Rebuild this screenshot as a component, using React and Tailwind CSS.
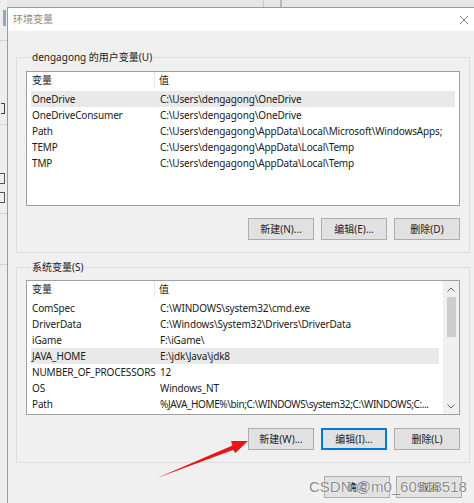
import React from 'react';

const FONT = { fontFamily: '"Noto Sans", "Noto Sans CJK SC", sans-serif' };

const userVars = [
  ['OneDrive', 'C:\\Users\\dengagong\\OneDrive', true],
  ['OneDriveConsumer', 'C:\\Users\\dengagong\\OneDrive'],
  ['Path', 'C:\\Users\\dengagong\\AppData\\Local\\Microsoft\\WindowsApps;'],
  ['TEMP', 'C:\\Users\\dengagong\\AppData\\Local\\Temp'],
  ['TMP', 'C:\\Users\\dengagong\\AppData\\Local\\Temp'],
];

const sysVars = [
  ['ComSpec', 'C:\\WINDOWS\\system32\\cmd.exe'],
  ['DriverData', 'C:\\Windows\\System32\\Drivers\\DriverData'],
  ['iGame', 'F:\\iGame\\'],
  ['JAVA_HOME', 'E:\\jdk\\Java\\jdk8', true],
  ['NUMBER_OF_PROCESSORS', '12'],
  ['OS', 'Windows_NT'],
  ['Path', '%JAVA_HOME%\\bin;C:\\WINDOWS\\system32;C:\\WINDOWS;C:...', false, true],
];

const Btn = ({ children, focused }) => (
  <div
    className={`w-[66px] h-[22px] flex items-center justify-center text-[10px] text-[#222] bg-[#e1e1e1] border ${
      focused ? 'border-[#0078d7] border-[2px]' : 'border-[#adadad]'
    }`}
  >
    {children}
  </div>
);

const Header = () => (
  <div className="h-[19px] flex text-[10px] text-[#1a1a1a] pb-[3px] items-center">
    <div className="w-[128px] pl-[5px] h-full flex items-center border-r border-[#e5e5e5]">变量</div>
    <div className="pl-[4px]">值</div>
  </div>
);

const Rows = ({ rows }) => (
  <div className="flex flex-col">
    {rows.map(([name, value, sel, tight]) => (
      <div
        key={name}
        className={`mx-[4px] pl-[1px] h-[16px] leading-[16px] grid grid-cols-[128px_1fr] text-[10px] text-[#1a1a1a] tracking-[-0.15px] whitespace-nowrap overflow-hidden ${
          sel ? 'bg-[#e9e9e9]' : ''
        }`}
      >
        <span>{name}</span>
        <span className={`overflow-hidden ${tight ? 'tracking-[-0.4px]' : ''}`}>{value}</span>
      </div>
    ))}
  </div>
);

function App() {
  return (
    <div className="relative w-[474px] h-[503px] overflow-hidden bg-[#e8e8e8] flex" style={FONT}>
      {/* background window strip */}
      <div className="w-[7px] shrink-0 flex flex-col pt-[10px] bg-[#eeeeee] overflow-hidden">
        <div className="h-[16px] w-[3px] ml-[3px] bg-[#4a7ab5] opacity-60" />
        <div className="h-[14px]" />
        <div className="h-px bg-[#d4d4d4]" />
        <div className="h-[62px]" />
        <div className="h-[11px] w-[4px] ml-[1px] border-y border-r border-[#444]" />
        <div className="h-px bg-[#d4d4d4] mt-[10px]" />
        <div className="h-[48px]" />
        <div className="h-[11px] w-[5px] border-y border-r border-[#555]" />
        <div className="h-[11px] w-[5px] mt-[8px] border-y border-r border-[#555]" />
        <div className="h-px bg-[#d4d4d4] mt-[10px]" />
        <div className="h-[50px]" />
        <div className="h-px bg-[#d4d4d4]" />
      </div>

      <div className="flex-1 flex flex-col">
        <div className="h-[7px] shrink-0 bg-[#e6e6e6] flex">
          <div className="ml-[256px] w-px bg-[#c8c8c8]" />
          <div className="ml-[16px] w-[2px] bg-[#b8b8b8]" />
        </div>

        {/* dialog */}
        <div className="flex-1 flex flex-col border-l border-t border-[#9c9c9c] bg-[#f0f0f0]">
          <div className="h-[23px] bg-white flex items-center justify-between pl-[5px] pr-[4px]">
            <span className="text-[10px] text-[#8a8a8a]">环境变量</span>
            <svg width="10" height="10" viewBox="0 0 10 10" className="mr-[1px]">
              <path d="M1 1L9 9M9 1L1 9" stroke="#8a8a8a" strokeWidth="1" fill="none" />
            </svg>
          </div>

          <div className="pl-[8px] pt-[18px] flex flex-col">
            <fieldset className="w-[452px] border border-[#dcdcdc] px-[9px] pb-[12px]">
              <legend className="ml-[5px] px-[1px] text-[10px] leading-[16px] text-[#1a1a1a]">dengagong 的用户变量(U)</legend>
              <div className="mt-[6px] w-[434px] h-[135px] border border-[#a0a0a0] bg-white flex flex-col">
                <Header />
                <Rows rows={userVars} />
              </div>
              <div className="mt-[12px] flex justify-end gap-[7px] w-[434px]">
                <Btn>新建(N)...</Btn>
                <Btn>编辑(E)...</Btn>
                <Btn>删除(D)</Btn>
              </div>
            </fieldset>

            <fieldset className="mt-[6px] w-[452px] border border-[#dcdcdc] px-[9px] pb-[12px]">
              <legend className="ml-[5px] px-[1px] text-[10px] leading-[16px] text-[#1a1a1a]">系统变量(S)</legend>
              <div className="mt-[5px] w-[434px] h-[135px] border border-[#a0a0a0] bg-white flex">
                <div className="flex-1 flex flex-col min-w-0">
                  <Header />
                  <Rows rows={sysVars} />
                </div>
                <div className="w-[16px] bg-[#f0f0f0] flex flex-col items-center">
                  <div className="h-[16px] flex items-center justify-center">
                    <svg width="8" height="5" viewBox="0 0 8 5">
                      <path d="M0.5 4.5L4 1L7.5 4.5" stroke="#606060" strokeWidth="1" fill="none" />
                    </svg>
                  </div>
                  <div className="w-[9px] h-[40px] bg-[#cdcdcd]" />
                  <div className="flex-1" />
                  <div className="h-[16px] flex items-center justify-center">
                    <svg width="8" height="5" viewBox="0 0 8 5">
                      <path d="M0.5 0.5L4 4L7.5 0.5" stroke="#606060" strokeWidth="1" fill="none" />
                    </svg>
                  </div>
                </div>
              </div>
              <div className="mt-[13px] flex justify-end gap-[7px] w-[434px]">
                <Btn>新建(W)...</Btn>
                <Btn focused>编辑(I)...</Btn>
                <Btn>删除(L)</Btn>
              </div>
            </fieldset>

            <div className="mt-[13px] w-[446px] flex justify-end gap-[6px]">
              <Btn>确定</Btn>
              <Btn>取消</Btn>
            </div>
          </div>
        </div>
      </div>

      {/* red arrow annotation */}
      <svg className="absolute left-0 top-0 pointer-events-none" width="474" height="503" viewBox="0 0 474 503">
        <polygon points="157,478 233,450 235.5,453 248,441 231,441 232.5,445.5" fill="#e8151b" />
      </svg>

      {/* watermark */}
      <div
        className="absolute left-[309px] top-[476px] text-[15px] leading-[22px] text-[#8c8c8c] whitespace-nowrap"
        style={{ fontFamily: '"Liberation Sans", sans-serif', textShadow: '0 0 1px #ffffff, 0 0 2px #ffffff' }}
      >
        CSDN @m0_60918518
      </div>
    </div>
  );
}

export default App;
